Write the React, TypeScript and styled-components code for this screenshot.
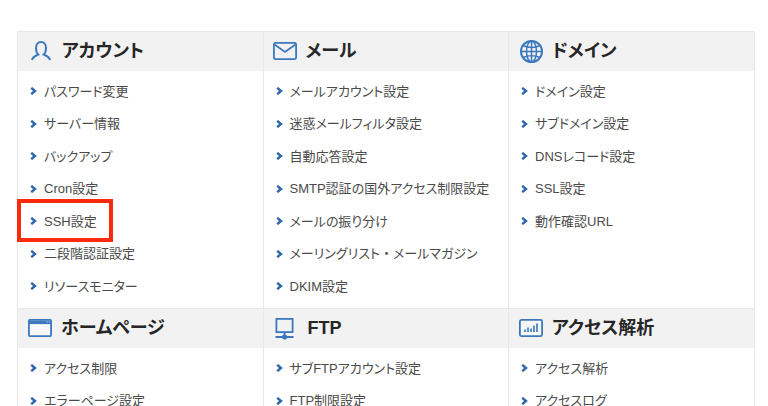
import React from "react";
import styled, { createGlobalStyle } from "styled-components";

const Global = createGlobalStyle`
  html, body { margin: 0; padding: 0; background: #fff; height: 406px; overflow: hidden; }
  body {
    font-family: "Helvetica Neue", "Liberation Sans", "Noto Sans CJK JP", sans-serif;
    font-feature-settings: "palt";
  }
`;

const Page = styled.div`
  height: 406px;
  overflow: hidden;
  padding: 31px 13px 0 17px;
  box-sizing: border-box;
`;

const Grid = styled.div`
  display: grid;
  grid-template-columns: 245.5px 245.5px 247px;
  grid-auto-rows: max-content;
`;

const Section = styled.section`
  border-left: 1px solid #e8e8e8;
  &:nth-child(3n) { border-right: 1px solid #e8e8e8; }
`;

const Header = styled.h2<{ $indent: number }>`
  display: flex;
  align-items: center;
  height: 40px;
  margin: 0;
  padding-left: ${(p) => p.$indent}px;
  box-sizing: border-box;
  background: #f2f2f2;
  box-shadow: inset 0 1px 0 #e8e8e8;
  color: #262626;
  font-size: 18px;
  font-weight: 700;
  line-height: 1;
`;

const IconSlot = styled.span`
  display: flex;
  justify-content: center;
  align-items: center;
  width: 24px;
  height: 24px;
  margin-right: 9px;
  flex: none;
`;

const List = styled.ul`
  list-style: none;
  margin: 0;
  padding: 3px 0 0 12px;
  height: 237px;
  box-sizing: border-box;
`;

const Item = styled.li<{ $boxed?: boolean }>`
  position: relative;
  display: flex;
  align-items: center;
  height: 32.5px;
  color: #4a4a4a;
  font-size: 13px;
  white-space: nowrap;
  ${(p) =>
    p.$boxed &&
    `&::after {
      content: "";
      position: absolute;
      left: -13px;
      top: -5px;
      width: 96px;
      height: 43px;
      box-sizing: border-box;
      border: 4px solid #fb2a0c;
    }`}
`;

const Label = styled.span`
  display: inline;
`;

const FullDot = styled.span`
  font-feature-settings: normal;
`;

const Chevron = styled.svg`
  width: 7px;
  height: 8px;
  margin: 2px 7px 0 0;
  flex: none;
`;

const IconSvg = styled.svg`
  display: block;
  overflow: visible;
  fill: none;
  stroke: #3b78bd;
`;

const Arrow = () => (
  <Chevron viewBox="0 0 7 8">
    <path d="M1.2 0.8 L5 4 L1.2 7.2" fill="none" stroke="#2f66ab" strokeWidth="2.4" />
  </Chevron>
);

const UserIcon = () => (
  <IconSvg width="20" height="20" viewBox="0 0 20 20" strokeWidth="2">
    <path d="M1 19 C1.5 16 4 15 7.2 13.6 C5.4 12 5 9.5 5 7 C5 3.5 7 1 10 1 C13 1 15 3.5 15 7 C15 9.5 14.6 12 12.8 13.6 C16 15 18.5 16 19 19" />
  </IconSvg>
);

const MailIcon = () => (
  <IconSvg width="24" height="18" viewBox="0 0 24 18" strokeWidth="1.8">
    <rect x="0.9" y="0.9" width="22.2" height="16.2" rx="1.5" />
    <path d="M1.5 2.5 L12 10 L22.5 2.5" />
  </IconSvg>
);

const GlobeIcon = () => (
  <IconSvg width="23" height="23" viewBox="0 0 23 23" strokeWidth="1.5">
    <circle cx="11.5" cy="11.5" r="10.5" strokeWidth="2" />
    <ellipse cx="11.5" cy="11.5" rx="5" ry="10.5" />
    <path d="M11.5 1 V22 M1 11.5 H22 M3 5.5 C8 8 15 8 20 5.5 M3 17.5 C8 15 15 15 20 17.5" />
  </IconSvg>
);

const WindowIcon = () => (
  <IconSvg width="24" height="18" viewBox="0 0 24 18" strokeWidth="1.8">
    <rect x="0.9" y="0.9" width="22.2" height="16.2" rx="1" fill="#f8f8f8" />
    <path d="M1 3.4 H23" strokeWidth="3.4" />
    <path d="M18.5 2.8 H19.8 M20.8 2.8 H22" stroke="#a9c5e4" strokeWidth="1.2" />
  </IconSvg>
);

const MonitorIcon = () => (
  <IconSvg width="24" height="21" viewBox="0 0 24 21" strokeWidth="1.8">
    <rect x="1.4" y="0.9" width="16.2" height="13.2" />
    <path d="M9.5 14.5 V19 M0.5 19 H18.5" />
    <circle cx="9.5" cy="19" r="1.7" fill="#3b78bd" />
  </IconSvg>
);

const ChartIcon = () => (
  <IconSvg width="24" height="18" viewBox="0 0 24 18" strokeWidth="1.8">
    <rect x="0.9" y="0.9" width="22.2" height="16.2" rx="1.5" fill="#f8f8f8" />
    <path d="M6 13 V10.5 M9 13 V8.5 M12 13 V9.5 M15 13 V6.5 M18 13 V4.5" strokeWidth="2" stroke="#5b8fc9" />
  </IconSvg>
);

type Sec = { title: string; icon: React.ReactNode; indent: number; items: string[] };

const sections: Sec[] = [
  {
    title: "アカウント",
    icon: <UserIcon />,
    indent: 11,
    items: ["パスワード変更", "サーバー情報", "バックアップ", "Cron設定", "SSH設定", "二段階認証設定", "リソースモニター"],
  },
  {
    title: "メール",
    icon: <MailIcon />,
    indent: 9,
    items: ["メールアカウント設定", "迷惑メールフィルタ設定", "自動応答設定", "SMTP認証の国外アクセス制限設定", "メールの振り分け", "メーリングリスト・メールマガジン", "DKIM設定"],
  },
  {
    title: "ドメイン",
    icon: <GlobeIcon />,
    indent: 10,
    items: ["ドメイン設定", "サブドメイン設定", "DNSレコード設定", "SSL設定", "動作確認URL"],
  },
  {
    title: "ホームページ",
    icon: <WindowIcon />,
    indent: 10,
    items: ["アクセス制限", "エラーページ設定"],
  },
  {
    title: "FTP",
    icon: <MonitorIcon />,
    indent: 11,
    items: ["サブFTPアカウント設定", "FTP制限設定"],
  },
  {
    title: "アクセス解析",
    icon: <ChartIcon />,
    indent: 10,
    items: ["アクセス解析", "アクセスログ"],
  },
];

const renderLabel = (text: string) => {
  const [before, after] = text.split("・");
  if (after === undefined) return <Label>{text}</Label>;
  return (
    <Label>
      {before}
      <FullDot>・</FullDot>
      {after}
    </Label>
  );
};

export default function App() {
  return (
    <>
      <Global />
      <Page>
        <Grid>
          {sections.map((s) => (
            <Section key={s.title}>
              <Header $indent={s.indent}>
                <IconSlot>{s.icon}</IconSlot>
                {s.title}
              </Header>
              <List>
                {s.items.map((it) => (
                  <Item key={it} $boxed={it === "SSH設定"}>
                    <Arrow />
                    {renderLabel(it)}
                  </Item>
                ))}
              </List>
            </Section>
          ))}
        </Grid>
      </Page>
    </>
  );
}
